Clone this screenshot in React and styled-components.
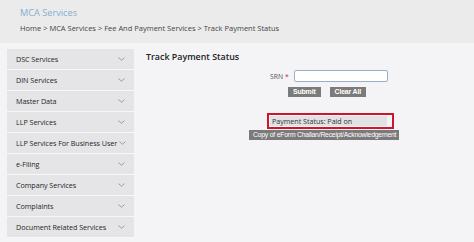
import React from 'react';
import styled, { createGlobalStyle } from 'styled-components';

/* ==================================================
 *  Styles
================================================== */
const GlobalStyle = createGlobalStyle`
  html, body {
    margin: 0;
    padding: 0;
    background: #f4f4f6;
    font-family: "Open Sans", "Noto Sans", sans-serif;
    color: #333;
  }
`;

const Page = styled.div`
  width: 474px;
  height: 242px;
  overflow: hidden;
  background: #f4f4f6;
`;

const Header = styled.header`
  background: #ebebeb;
  height: 43px;
  padding: 6px 0 0 20px;
  box-sizing: border-box;
`;

const SiteTitle = styled.div`
  font-size: 9.2px;
  color: #86afcf;
  line-height: 14px;
`;

const Crumbs = styled.div`
  font-size: 7.5px;
  color: #444;
  line-height: 11px;
  margin-top: 3px;
`;

const Body = styled.div`
  display: flex;
  padding: 6px 0 0 7px;
  gap: 12px;
`;

const Sidebar = styled.ul`
  list-style: none;
  margin: 0;
  padding: 0;
  width: 127px;
  flex-shrink: 0;
`;

const SideItem = styled.li`
  height: 20px;
  display: flex;
  align-items: center;
  justify-content: space-between;
  padding: 0 9px 0 9px;
  background: #e5e5e7;
  border-bottom: 1.6px solid #f7f7f9;
  font-size: 7.2px;
  color: #262626;
  white-space: nowrap;
  letter-spacing: -0.05px;
`;

const Chevron = styled.svg`
  width: 7px;
  height: 4px;
  flex-shrink: 0;
  margin-left: 2px;
`;

const Main = styled.section`
  flex: 1;
  display: flex;
  flex-direction: column;
`;

const Title = styled.h2`
  margin: 0;
  font-size: 8.9px;
  font-weight: 600;
  color: #222;
  line-height: 14px;
  padding-top: 1px;
`;

const FormRow = styled.div`
  display: flex;
  align-items: center;
  margin: 6px 0 0 124px;
  gap: 5px;
`;

const Label = styled.span`
  font-size: 6.8px;
  color: #555;
  span {
    color: #d21f2a;
    margin-left: 2px;
  }
`;

const Input = styled.div`
  width: 92px;
  height: 10px;
  background: #fff;
  border: 1px solid #9bb0c4;
  border-radius: 2px;
`;

const Buttons = styled.div`
  display: flex;
  gap: 9px;
  margin: 5px 0 0 142px;
`;

const GrayButton = styled.div`
  background: #7b7b7b;
  color: #fff;
  font-family: "Liberation Sans", Arial, sans-serif;
  font-size: 7px;
  font-weight: bold;
  height: 10px;
  line-height: 10px;
  padding: 0 5px;
  letter-spacing: -0.2px;
`;

const StatusBlock = styled.div`
  display: flex;
  flex-direction: column;
  align-items: flex-start;
  margin: 16px 0 0 121px;
`;

const StatusBox = styled.div`
  border: 2px solid #d0142c;
  width: 127px;
  height: 16px;
  box-sizing: border-box;
  padding: 1px;
  display: flex;
`;

const StatusFill = styled.div`
  background: #e2e2e4;
  width: 117px;
  font-size: 7.1px;
  color: #333;
  line-height: 10px;
  padding-left: 2px;
  box-sizing: border-box;
`;

const CopyBar = styled.div`
  margin: 1px 0 0 -18px;
  width: 150px;
  box-sizing: border-box;
  background: #7a7a7a;
  color: #fff;
  font-family: "Liberation Sans", Arial, sans-serif;
  font-size: 6.8px;
  height: 10px;
  line-height: 10px;
  padding: 0 0 0 4px;
  letter-spacing: -0.2px;
  white-space: nowrap;
  overflow: hidden;
`;

/* ==================================================
 *  Helpers
================================================== */
const menu = [
  'DSC Services',
  'DIN Services',
  'Master Data',
  'LLP Services',
  'LLP Services For Business User',
  'e-Filing',
  'Company Services',
  'Complaints',
  'Document Related Services',
];

function Down() {
  return (
    <Chevron viewBox="0 0 7 4">
      <path d="M0.5 0.6 L3.5 3.2 L6.5 0.6" fill="none" stroke="#959595" strokeWidth="0.9" />
    </Chevron>
  );
}

/* ==================================================
 *  Render
================================================== */
export default function App() {
  return (
    <Page>
      <GlobalStyle />
      <Header>
        <SiteTitle>MCA Services</SiteTitle>
        <Crumbs>
          Home &gt; MCA Services &gt; Fee And Payment Services &gt; Track Payment Status
        </Crumbs>
      </Header>
      <Body>
        <Sidebar>
          {menu.map((m) => (
            <SideItem key={m}>
              {m}
              <Down />
            </SideItem>
          ))}
        </Sidebar>
        <Main>
          <Title>Track Payment Status</Title>
          <FormRow>
            <Label>
              SRN<span>*</span>
            </Label>
            <Input />
          </FormRow>
          <Buttons>
            <GrayButton>Submit</GrayButton>
            <GrayButton>Clear All</GrayButton>
          </Buttons>
          <StatusBlock>
            <StatusBox>
              <StatusFill>Payment Status: Paid on</StatusFill>
            </StatusBox>
            <CopyBar>Copy of eForm Challan/Receipt/Acknowledgement</CopyBar>
          </StatusBlock>
        </Main>
      </Body>
    </Page>
  );
}
